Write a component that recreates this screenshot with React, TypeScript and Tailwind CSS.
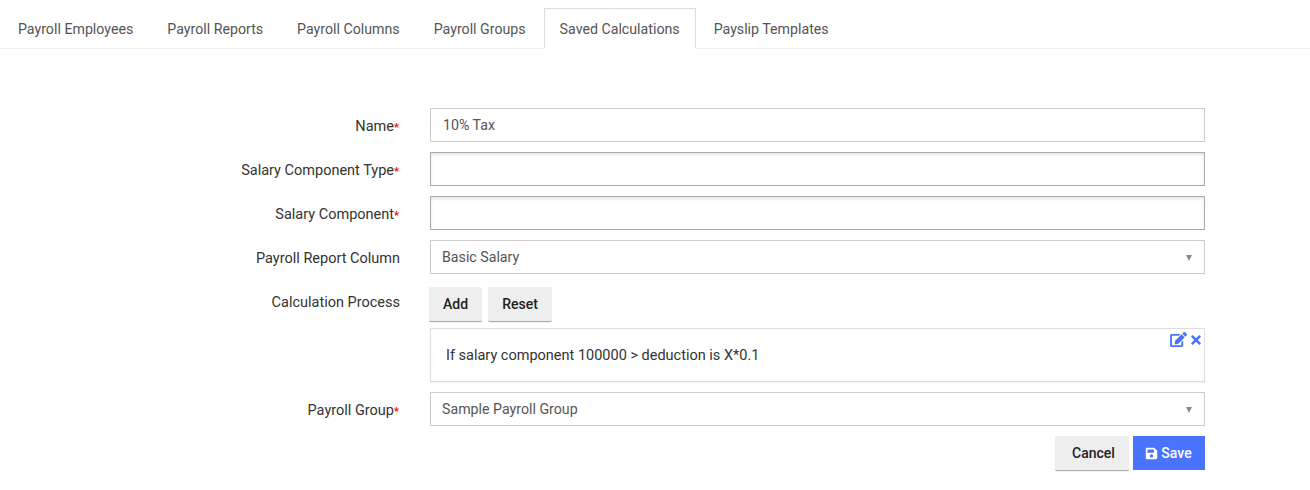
import React from 'react';
import { FaEdit, FaTimes, FaSave } from 'react-icons/fa';

const tabs = ['Payroll Employees', 'Payroll Reports', 'Payroll Columns', 'Payroll Groups', 'Saved Calculations', 'Payslip Templates'];

const Label: React.FC<{ text: string; required?: boolean; className?: string }> = ({ text, required, className = 'pt-[9px]' }) => (
  <label className={`w-[400px] shrink-0 text-right text-[14.5px] leading-[20px] text-[#333] ${className}`}>
    {text}
    {required && <span className="text-[#f00] text-[11px] font-bold mr-[1px]">*</span>}
  </label>
);

const Select: React.FC<{ value: string }> = ({ value }) => (
  <div className="w-[775px] h-[34px] border border-[#ccc] flex items-center justify-between pl-[11px] pr-[12px] text-[14.2px] text-[#555]">
    <span className="pt-[2px]">{value}</span>
    <span className="w-0 h-0 border-x-[3.5px] border-x-transparent border-t-[6px] border-t-[#888] mt-[1px]" />
  </div>
);

const EmptyInput = () => (
  <div className="w-[775px] h-[34px] border border-[#aaa] shadow-[inset_0_2px_3px_rgba(0,0,0,0.1)]" />
);

const GrayButton: React.FC<{ text: string; className: string }> = ({ text, className }) => (
  <button className={`bg-[#eee] border-b border-b-[#aaa] rounded-[2px] text-[14px] font-medium text-[#222] shadow-[0_1px_1px_rgba(0,0,0,0.06)] ${className}`}>
    {text}
  </button>
);

export default function App() {
  return (
    <div className="w-[1310px] h-[490px] bg-white overflow-hidden font-['Roboto',sans-serif]">
      {/* Tabs */}
      <ul className="h-[49px] border-b border-[#f0f0f0] flex items-end pl-[2px]">
        {tabs.map((tab) => (
          <li
            key={tab}
            className={`h-[41px] mr-[2px] -mb-px px-[15px] border text-[14.2px] leading-[40px] text-[#555] ${
              tab === 'Saved Calculations' ? 'border-[#ddd] border-b-white bg-white' : 'border-transparent'
            }`}
          >
            {tab}
          </li>
        ))}
      </ul>

      {/* Form */}
      <div className="pt-[59px] flex flex-col">
        <div className="flex gap-[30px] mb-[10px]">
          <Label text="Name" required />
          <div className="w-[775px] h-[34px] border border-[#ccc] flex items-center pl-[12px] text-[14.2px] text-[#555]">
            <span className="pt-[2px]">10% Tax</span>
          </div>
        </div>
        <div className="flex gap-[30px] mb-[10px]">
          <Label text="Salary Component Type" required />
          <EmptyInput />
        </div>
        <div className="flex gap-[30px] mb-[10px]">
          <Label text="Salary Component" required />
          <EmptyInput />
        </div>
        <div className="flex gap-[30px] mb-[13px]">
          <Label text="Payroll Report Column" />
          <Select value="Basic Salary" />
        </div>
        <div className="flex gap-[29px] mb-[6px]">
          <Label text="Calculation Process" className="pt-[6px]" />
          <div className="flex gap-[6px]">
            <GrayButton text="Add" className="w-[53px] h-[35px]" />
            <GrayButton text="Reset" className="w-[64px] h-[35px]" />
          </div>
        </div>
        <div className="flex gap-[30px] mb-[10px]">
          <div className="w-[400px] shrink-0" />
          <div className="relative w-[775px] h-[54px] border border-[#ddd] shadow-[0_1px_1px_rgba(0,0,0,0.05)] pl-[15px] pt-[17px] text-[14.5px] leading-[20px] text-[#333]">
            If salary component 100000 &gt; deduction is X*0.1
            <div className="absolute top-[3px] right-[2px] flex items-center gap-[3px] text-[#4a74ff]">
              <FaEdit className="w-[17px] h-[15px]" />
              <FaTimes className="w-[12px] h-[14px]" />
            </div>
          </div>
        </div>
        <div className="flex gap-[30px] mb-[10px]">
          <Label text="Payroll Group" required />
          <Select value="Sample Payroll Group" />
        </div>
        <div className="w-[1205px] flex justify-end gap-[4px]">
          <GrayButton text="Cancel" className="w-[74px] h-[35px] pl-[3px]" />
          <button className="w-[72px] h-[34px] bg-[#4a74ff] text-white text-[14px] font-medium flex items-center justify-center gap-[3px] pr-[1px]">
            <FaSave className="w-[13px] h-[13px]" />
            Save
          </button>
        </div>
      </div>
    </div>
  );
}
